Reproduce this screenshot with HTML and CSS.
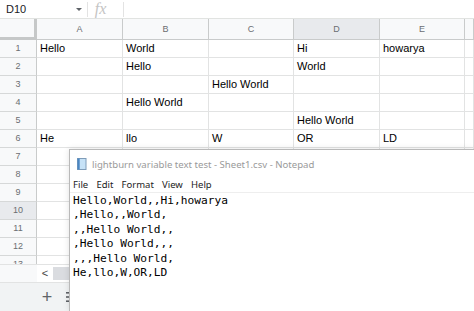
FILE: index.html
```html
<!DOCTYPE html>
<html lang="en">
  <head>
    <meta charset="UTF-8" />
    <title>Sheet1</title>
    <link rel="stylesheet" href="styles.css">
  </head>

  <body>
    <div class="sheet">
      <div class="formulaBar">
        <div class="nameBox">D10</div>
        <div class="nameArrow"></div>
        <div class="barSep"></div>
        <div class="fxBox">fx</div>
        <div class="barSep"></div>
      </div>

      <div class="gridWrap">
        <div class="grid">
          <div class="corner"></div>
          <div class="colHead">A</div>
          <div class="colHead">B</div>
          <div class="colHead">C</div>
          <div class="colHead sel">D</div>
          <div class="colHead">E</div>
          <div class="colHead"></div>

          <div class="rowHead">1</div>
          <div>Hello</div><div>World</div><div></div><div>Hi</div><div>howarya</div><div></div>
          <div class="rowHead">2</div>
          <div></div><div>Hello</div><div></div><div>World</div><div></div><div></div>
          <div class="rowHead">3</div>
          <div></div><div></div><div>Hello World</div><div></div><div></div><div></div>
          <div class="rowHead">4</div>
          <div></div><div>Hello World</div><div></div><div></div><div></div><div></div>
          <div class="rowHead">5</div>
          <div></div><div></div><div></div><div>Hello World</div><div></div><div></div>
          <div class="rowHead">6</div>
          <div>He</div><div>llo</div><div>W</div><div>OR</div><div>LD</div><div></div>
          <div class="rowHead">7</div>
          <div></div><div></div><div></div><div></div><div></div><div></div>
          <div class="rowHead">8</div>
          <div></div><div></div><div></div><div></div><div></div><div></div>
          <div class="rowHead">9</div>
          <div></div><div></div><div></div><div></div><div></div><div></div>
          <div class="rowHead sel">10</div>
          <div></div><div></div><div></div><div></div><div></div><div></div>
          <div class="rowHead">11</div>
          <div></div><div></div><div></div><div></div><div></div><div></div>
          <div class="rowHead">12</div>
          <div></div><div></div><div></div><div></div><div></div><div></div>
          <div class="rowHead">13</div>
          <div></div><div></div><div></div><div></div><div></div><div></div>
        </div>
      </div>

      <div class="hScroll">
        <div class="hLeft"></div>
        <div class="hBtn">&lt;</div>
        <div class="hThumb"></div>
      </div>

      <div class="tabBar">
        <div class="addSheet">+</div>
        <div class="allSheets">
          <svg width="4" height="10" viewBox="0 0 4 10">
            <rect x="0" y="0" width="4" height="1.6" fill="#5f6368" />
            <rect x="0" y="4.2" width="4" height="1.6" fill="#5f6368" />
            <rect x="0" y="8.4" width="4" height="1.6" fill="#5f6368" />
          </svg>
        </div>
      </div>
    </div>

    <!-- notepad window sits over the sheet -->
    <div class="notepad">
      <div class="npTitle">
        <svg class="npIcon" width="11" height="12" viewBox="0 0 11 12">
          <rect x="1.5" y="0.5" width="8.5" height="11" fill="#c6e2f7" stroke="#7f9cb8" />
          <rect x="1.5" y="0.5" width="2.2" height="11" fill="#4a86c2" />
        </svg>
        <span>lightburn variable text test - Sheet1.csv - Notepad</span>
      </div>
      <div class="npMenu">
        <span>File</span>
        <span>Edit</span>
        <span>Format</span>
        <span>View</span>
        <span>Help</span>
      </div>
<pre class="npText">Hello,World,,Hi,howarya
,Hello,,World,
,,Hello World,,
,Hello World,,,
,,,Hello World,
He,llo,W,OR,LD</pre>
    </div>
  </body>
</html>
```

FILE: styles.css
```css
body {
  margin: 0;
  width: 474px;
  height: 311px;
  overflow: hidden;
  position: relative;
  background: #ffffff;
  font-family: "Liberation Sans", Arial, sans-serif;
}

.sheet {
  display: flex;
  flex-direction: column;
  height: 311px;
}

/* formula bar */
.formulaBar {
  display: flex;
  align-items: center;
  height: 19px;
  flex: none;
  box-sizing: border-box;
  border-bottom: 1px solid #e1e3e1;
}

.nameBox {
  width: 76px;
  box-sizing: border-box;
  padding-left: 6px;
  font-size: 11px;
  color: #202124;
}

.nameArrow {
  width: 0;
  height: 0;
  border-left: 3px solid transparent;
  border-right: 3px solid transparent;
  border-top: 3px solid #5f6368;
  margin-top: 1px;
}

.barSep {
  width: 1px;
  height: 15px;
  background: #e3e3e3;
  margin-left: 5px;
}

.fxBox {
  width: 35px;
  margin-left: -5px;
  text-align: center;
  font-family: "Liberation Serif", serif;
  font-style: italic;
  font-size: 16px;
  line-height: 18px;
  color: #c4c4c4;
}

/* grid */
.gridWrap {
  flex: 1;
  overflow: hidden;
}

.grid {
  display: grid;
  grid-template-columns: 37px 86px 86px 85px 86px 85px 1fr;
  grid-template-rows: 21px;
  grid-auto-rows: 18px;
}

.grid > div {
  box-sizing: border-box;
  border-right: 1px solid #e2e3e3;
  border-bottom: 1px solid #e2e3e3;
  padding-left: 3px;
  font-size: 11px;
  line-height: 17px;
  color: #000000;
  white-space: nowrap;
}

.grid > .corner {
  background: #f8f9fa;
  border-right: 3px solid #c6c8c8;
  border-bottom: 3px solid #c6c8c8;
}

.grid > .colHead {
  padding: 0;
  text-align: center;
  background: #f8f9fa;
  border-right-color: #c9cbcb;
  border-bottom-color: #c9cbcb;
  font-size: 9px;
  line-height: 20px;
  color: #6b6e72;
}

.grid > .rowHead {
  padding: 0;
  text-align: center;
  background: #f8f9fa;
  border-right-color: #c9cbcb;
  border-bottom-color: #d6d8d8;
  font-size: 9px;
  line-height: 17px;
  color: #6b6e72;
}

.grid > .sel {
  background: #e8eaed;
}

/* bottom scroll and tabs */
.hScroll {
  display: flex;
  height: 18px;
  flex: none;
  background: #ffffff;
  border-top: 1px solid #e2e3e3;
  box-sizing: border-box;
}

.hLeft {
  width: 37px;
  background: #f8f9fa;
}

.hBtn {
  width: 16px;
  text-align: center;
  font-size: 11px;
  line-height: 16px;
  color: #444746;
}

.hThumb {
  width: 60px;
  margin: 2px 0;
  background: #dadce0;
}

.tabBar {
  display: flex;
  align-items: center;
  height: 29px;
  flex: none;
  box-sizing: border-box;
  background: #f1f3f4;
  border-top: 1px solid #e2e3e3;
}

.addSheet {
  width: 14px;
  margin-left: 40px;
  text-align: center;
  font-size: 18px;
  color: #5f6368;
}

.allSheets {
  display: flex;
  margin-left: 12px;
}

/* notepad */
.notepad {
  position: absolute;
  left: 69px;
  top: 149px;
  width: 404px;
  height: 161px;
  border: 1px solid #b9b9b9;
  border-right: none;
  border-bottom: none;
  background: #ffffff;
  box-shadow: 0 0 6px rgba(0, 0, 0, 0.12);
  font-family: "Noto Sans", "Open Sans", sans-serif;
  overflow: hidden;
}

.npTitle {
  display: flex;
  align-items: center;
  gap: 5px;
  height: 28px;
  padding-left: 6px;
  font-size: 9.6px;
  color: #9a9a9a;
}

.npMenu {
  display: flex;
  gap: 8.2px;
  height: 14px;
  padding-left: 3px;
  font-size: 9.5px;
  line-height: 14px;
  color: #222222;
  border-bottom: 1px solid #eeeeee;
}

.npText {
  margin: 0;
  padding: 1px 3px 0;
  font-family: "DejaVu Sans Mono", monospace;
  font-size: 11.2px;
  line-height: 14.4px;
  color: #000000;
}
```
